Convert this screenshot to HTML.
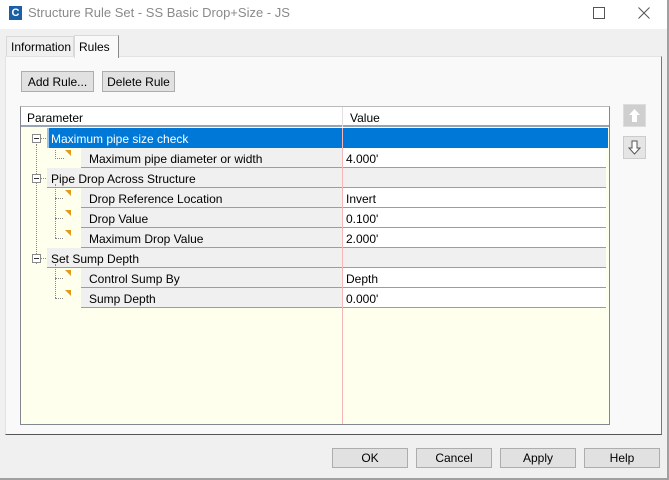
<!DOCTYPE html>
<html><head><style>
body{margin:0;width:669px;height:480px;background:#f0f0f0;font-family:"Liberation Sans",sans-serif;font-size:12px;color:#000;position:relative;overflow:hidden}
.a{position:absolute}
.t{position:absolute;margin-top:1px}
.btn{position:absolute;background:#e1e1e1;border:1px solid #adadad;box-sizing:border-box;text-align:center;line-height:19px}
.cell{position:absolute;top:0;height:19px;line-height:19px;border-bottom:1px solid #8ea0b5;box-sizing:content-box}
.exp{position:absolute;width:7px;height:7px;border:1px solid #8a8a8a;background:#fff}
.exp:after{content:"";position:absolute;left:1px;top:3px;width:5px;height:1px;background:#333}
.flag{position:absolute;width:0;height:0;border-top:6px solid #e09b1b;border-left:6px solid transparent}
</style></head><body>
<div class="a" style="left:0;top:0;width:667px;height:29px;background:#fff"></div>
<div class="a" style="left:667px;top:0;width:2px;height:480px;background:#a0a0a0"></div>
<div class="a" style="left:9px;top:6px;width:13px;height:14px;background:#1b5fa6;color:#fff;font-weight:bold;font-size:11px;line-height:14px;text-align:center">C</div>
<div class="a" style="left:28px;top:5px;color:#8a8a8a;font-size:13px">Structure Rule Set - SS Basic Drop+Size - JS</div>
<div class="a" style="left:593px;top:7px;width:10px;height:10px;border:1px solid #555"></div>
<svg class="a" style="left:638px;top:7px" width="12" height="12"><path d="M0.5 0.5L11.5 11.5M11.5 0.5L0.5 11.5" stroke="#555" stroke-width="1"/></svg>
<div class="a" style="left:6px;top:36px;width:68px;height:21px;border:1px solid #d9d9d9;border-bottom:none;background:#f0f0f0;line-height:20px;padding-left:4px;box-sizing:border-box">Information</div>
<div class="a" style="left:74px;top:35px;width:45px;height:23px;border:1px solid #d9d9d9;border-right:1px solid #888;border-bottom:none;background:#f9f9f9;line-height:22px;padding-left:4px;box-sizing:border-box;z-index:2">Rules</div>
<div class="a" style="left:5px;top:56px;width:657px;height:379px;background:#f9f9fa;border:1px solid #e3e3e3;border-right:1px solid #777;border-bottom:1px solid #555;box-sizing:border-box"></div>
<div class="btn" style="left:21px;top:71px;width:73px;height:21px;line-height:20px">Add Rule...</div>
<div class="btn" style="left:102px;top:71px;width:73px;height:21px;line-height:20px">Delete Rule</div>
<div class="a" style="left:20px;top:106px;width:590px;height:319px;border:1px solid #828790;border-top-color:#bbb;box-sizing:border-box;background:#ffffee"></div>
<div class="a" style="left:21px;top:107px;width:588px;height:20px;background:#fff;border-bottom:2px solid #9aa4b0;box-sizing:border-box"></div>
<div class="t" style="left:27px;top:110px">Parameter</div>
<div class="a" style="left:342px;top:107px;width:1px;height:20px;background:#e0e0e0"></div>
<div class="t" style="left:350px;top:110px">Value</div>
<div class="a" style="left:36px;top:144px;height:120px;border-left:1px dotted #888"></div>

<div class="a" style="left:47px;top:128px;width:561px;height:20px;background:#0078d7;border-left:2px solid #9cc3ea;box-sizing:border-box"></div>
<div class="t" style="left:51px;top:131px;color:#fff">Maximum pipe size check</div>
<div class="exp" style="left:32px;top:134px"></div>

<div class="cell" style="left:81px;top:148px;width:261px;background:#f0f0f0"></div>
<div class="cell" style="left:343px;top:148px;width:263px;background:#fff"></div>
<div class="t" style="left:89px;top:151px">Maximum pipe diameter or width</div><div class="t" style="left:346px;top:151px">4.000'</div>

<div class="cell" style="left:47px;top:168px;width:559px;background:#f0f0f0"></div>
<div class="t" style="left:51px;top:171px">Pipe Drop Across Structure</div>
<div class="exp" style="left:32px;top:174px"></div>

<div class="cell" style="left:81px;top:188px;width:261px;background:#f0f0f0"></div><div class="cell" style="left:343px;top:188px;width:263px;background:#fff"></div>
<div class="t" style="left:89px;top:191px">Drop Reference Location</div><div class="t" style="left:346px;top:191px">Invert</div>
<div class="cell" style="left:81px;top:208px;width:261px;background:#f0f0f0"></div><div class="cell" style="left:343px;top:208px;width:263px;background:#fff"></div>
<div class="t" style="left:89px;top:211px">Drop Value</div><div class="t" style="left:346px;top:211px">0.100'</div>
<div class="cell" style="left:81px;top:228px;width:261px;background:#f0f0f0"></div><div class="cell" style="left:343px;top:228px;width:263px;background:#fff"></div>
<div class="t" style="left:89px;top:231px">Maximum Drop Value</div><div class="t" style="left:346px;top:231px">2.000'</div>

<div class="cell" style="left:47px;top:248px;width:559px;background:#f0f0f0"></div>
<div class="t" style="left:51px;top:251px">Set Sump Depth</div>
<div class="exp" style="left:32px;top:254px"></div>

<div class="cell" style="left:81px;top:268px;width:261px;background:#f0f0f0"></div><div class="cell" style="left:343px;top:268px;width:263px;background:#fff"></div>
<div class="t" style="left:89px;top:271px">Control Sump By</div><div class="t" style="left:346px;top:271px">Depth</div>
<div class="cell" style="left:81px;top:288px;width:261px;background:#f0f0f0"></div><div class="cell" style="left:343px;top:288px;width:263px;background:#fff"></div>
<div class="t" style="left:89px;top:291px">Sump Depth</div><div class="t" style="left:346px;top:291px">0.000'</div>
<div class="a" style="left:342px;top:128px;width:1px;height:296px;background:#f4b6b6"></div>

<div class="a" style="left:55px;top:150px;height:8px;border-left:1px dotted #888;border-bottom:1px dotted #888;width:8px"></div><div class="flag" style="left:65px;top:150px"></div>
<div class="a" style="left:55px;top:184px;height:54px;border-left:1px dotted #888;width:0"></div>
<div class="a" style="left:55px;top:198px;width:8px;border-top:1px dotted #888"></div><div class="flag" style="left:65px;top:190px"></div>
<div class="a" style="left:55px;top:218px;width:8px;border-top:1px dotted #888"></div><div class="flag" style="left:65px;top:210px"></div>
<div class="a" style="left:55px;top:238px;width:8px;border-top:1px dotted #888"></div><div class="flag" style="left:65px;top:230px"></div>
<div class="a" style="left:55px;top:264px;height:34px;border-left:1px dotted #888;width:0"></div>
<div class="a" style="left:55px;top:278px;width:8px;border-top:1px dotted #888"></div><div class="flag" style="left:65px;top:270px"></div>
<div class="a" style="left:55px;top:298px;width:8px;border-top:1px dotted #888"></div><div class="flag" style="left:65px;top:290px"></div>
<div class="a" style="left:40px;top:138px;width:6px;border-top:1px dotted #888"></div>
<div class="a" style="left:40px;top:178px;width:6px;border-top:1px dotted #888"></div>
<div class="a" style="left:40px;top:258px;width:6px;border-top:1px dotted #888"></div>

<div class="a" style="left:623px;top:104px;width:23px;height:23px;background:#cfcfcf;border:1px solid #ddd;box-sizing:border-box">
<svg width="21" height="21" viewBox="0 0 21 21"><path d="M10.5 4 L16 10 H13 V17 H8 V10 H5 Z" fill="#fff"/></svg></div>
<div class="a" style="left:623px;top:136px;width:23px;height:23px;background:#e5e5e5;border:1px solid #ccc;box-sizing:border-box">
<svg width="21" height="21" viewBox="0 0 21 21"><path d="M8 4 H13 V11 H16 L10.5 17 L5 11 H8 Z" fill="#fff" stroke="#555" stroke-width="1"/></svg></div>

<div class="btn" style="left:332px;top:448px;width:76px;height:20px">OK</div>
<div class="btn" style="left:416px;top:448px;width:76px;height:20px">Cancel</div>
<div class="btn" style="left:500px;top:448px;width:76px;height:20px">Apply</div>
<div class="btn" style="left:584px;top:448px;width:76px;height:20px">Help</div>
<div class="a" style="left:0;top:478px;width:669px;height:2px;background:#a0a0a0"></div>
</body></html>
